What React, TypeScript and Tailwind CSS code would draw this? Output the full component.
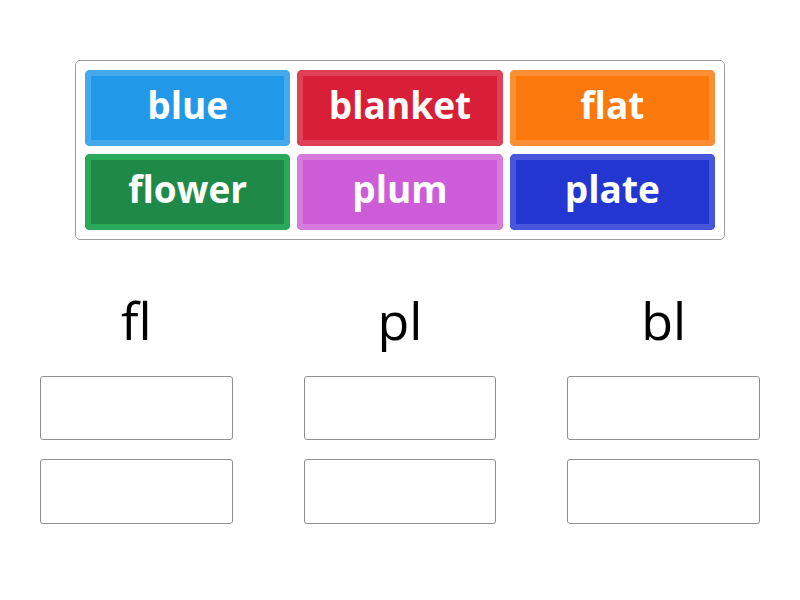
const tiles = [
  { word: 'blue', cls: 'bg-[#2299e8] shadow-[inset_0_0_0_6px_#45a9ee,inset_0_-6px_0_#1c86d2]' },
  { word: 'blanket', cls: 'bg-[#d81f37] shadow-[inset_0_0_0_6px_#de4158,inset_0_-6px_0_#b9182e]' },
  { word: 'flat', cls: 'bg-[#fb780d] shadow-[inset_0_0_0_6px_#fc8e36,inset_0_-6px_0_#dc660a]' },
  { word: 'flower', cls: 'bg-[#1f8a48] shadow-[inset_0_0_0_6px_#2aa95a,inset_0_-6px_0_#1a763d]' },
  { word: 'plum', cls: 'bg-[#cc5cd7] shadow-[inset_0_0_0_6px_#d67cdf,inset_0_-6px_0_#bd3ccd]' },
  { word: 'plate', cls: 'bg-[#2336d1] shadow-[inset_0_0_0_6px_#4757db,inset_0_-6px_0_#1d2eb6]' },
];

const groups = ['fl', 'pl', 'bl'];

export default function App() {
  return (
    <div className="w-[800px] h-[600px] bg-white font-['Open_Sans',sans-serif] overflow-hidden">
      {/* Word tiles */}
      <div className="mx-auto mt-[60px] w-[650px] h-[180px] rounded-[5px] border border-[#9a9a9a] p-[9px] grid grid-cols-3 gap-x-[7px] gap-y-[8px]">
        {tiles.map((t) => (
          <div
            key={t.word}
            className={`rounded-[5px] flex items-center justify-center pb-[8px] text-white font-bold text-[37px] leading-none ${t.cls}`}
          >
            {t.word}
          </div>
        ))}
      </div>

      {/* Drop columns */}
      <div className="mt-[54px] px-[40px] grid grid-cols-3 gap-x-[71px]">
        {groups.map((g) => (
          <div key={g} className="flex flex-col">
            <div className="text-center text-[52px] leading-[52px] text-black">{g}</div>
            <div className="mt-[30px] h-[64px] rounded-[3px] border border-[#8f8f8f]" />
            <div className="mt-[19px] h-[65px] rounded-[3px] border border-[#8f8f8f]" />
          </div>
        ))}
      </div>
    </div>
  );
}
